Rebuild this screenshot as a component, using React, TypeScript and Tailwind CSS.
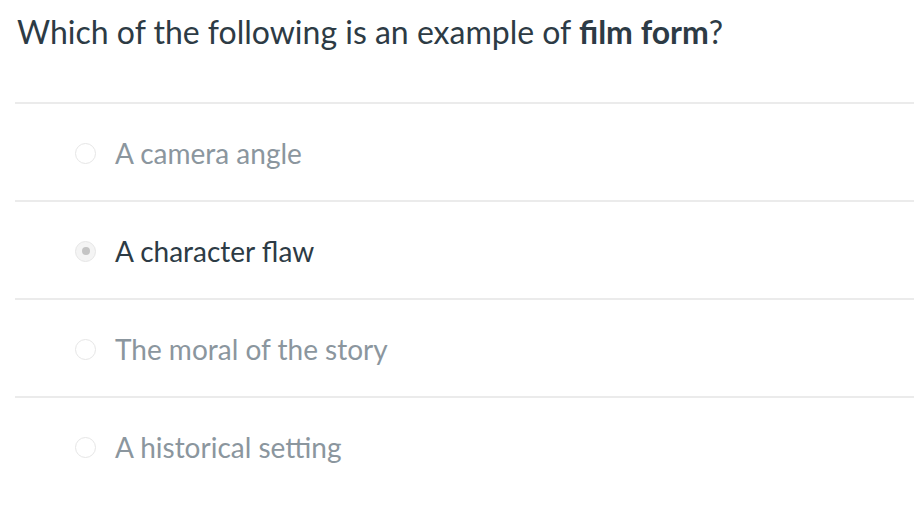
const options = [
  { label: "A camera angle", selected: false },
  { label: "A character flaw", selected: true },
  { label: "The moral of the story", selected: false },
  { label: "A historical setting", selected: false },
];

function Radio({ selected }: { selected: boolean }) {
  return (
    <span
      className={
        "flex h-[21px] w-[21px] shrink-0 items-center justify-center rounded-full border border-[#e6e6e6] " +
        (selected ? "bg-[#f4f4f4]" : "bg-white")
      }
    >
      {selected && <span className="h-[8px] w-[8px] rounded-full bg-[#c4c4c4]" />}
    </span>
  );
}

export default function App() {
  return (
    <div className="min-h-[518px] bg-white font-['Lato','Noto_Sans',sans-serif]">
      <h1 className="pl-[17px] pt-[12px] text-[32px] leading-[40px] font-normal text-[#2d3b45]">
        Which of the following is an example of <strong className="font-bold">film form</strong>?
      </h1>
      <div className="ml-[15px] mt-[50px]">
        {options.map((o) => (
          <div
            key={o.label}
            className="flex h-[98px] items-center gap-[19px] border-t-2 border-[#ebebeb] pl-[60px] pt-[2px]"
          >
            <Radio selected={o.selected} />
            <span
              className={
                "text-[28px] leading-[34px] " +
                (o.selected ? "text-[#2d3b45]" : "text-[#8b969e]")
              }
            >
              {o.label}
            </span>
          </div>
        ))}
      </div>
    </div>
  );
}
